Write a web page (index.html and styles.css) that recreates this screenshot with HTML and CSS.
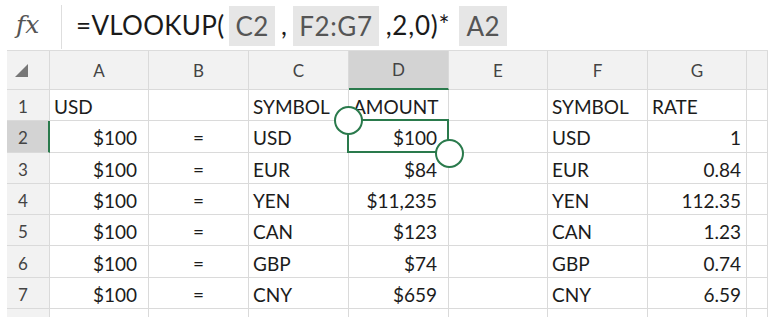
FILE: index.html
```html
<!DOCTYPE html>
<html>
<head>
<meta charset="utf-8">
<link rel="stylesheet" href="styles.css">
</head>
<body>
<div class="formula-bar">
  <div class="fx">fx</div>
  <div class="formula">
    <span>=VLOOKUP(</span>
    <span class="ref">C2</span>
    <span class="comma">,</span>
    <span class="ref">F2:G7</span>
    <span class="args">,2,0)*</span>
    <span class="ref last">A2</span>
  </div>
</div>
<div class="sheet">
  <div class="ch corner"><span class="tri"></span></div>
  <div class="ch">A</div><div class="ch">B</div><div class="ch">C</div><div class="ch sel">D</div><div class="ch">E</div><div class="ch">F</div><div class="ch">G</div><div class="ch"></div>

  <div class="rh">1</div>
  <div class="c">USD</div><div class="c"></div><div class="c">SYMBOL</div><div class="c">AMOUNT</div><div class="c"></div><div class="c">SYMBOL</div><div class="c">RATE</div><div class="c"></div>

  <div class="rh sel">2</div>
  <div class="c cur">$100</div><div class="c eq">=</div><div class="c">USD</div><div class="c cur active">$100<span class="handle h1"></span><span class="handle h2"></span></div><div class="c"></div><div class="c">USD</div><div class="c num">1</div><div class="c"></div>

  <div class="rh">3</div>
  <div class="c cur">$100</div><div class="c eq">=</div><div class="c">EUR</div><div class="c cur">$84</div><div class="c"></div><div class="c">EUR</div><div class="c num">0.84</div><div class="c"></div>

  <div class="rh">4</div>
  <div class="c cur">$100</div><div class="c eq">=</div><div class="c">YEN</div><div class="c cur">$11,235</div><div class="c"></div><div class="c">YEN</div><div class="c num">112.35</div><div class="c"></div>

  <div class="rh">5</div>
  <div class="c cur">$100</div><div class="c eq">=</div><div class="c">CAN</div><div class="c cur">$123</div><div class="c"></div><div class="c">CAN</div><div class="c num">1.23</div><div class="c"></div>

  <div class="rh">6</div>
  <div class="c cur">$100</div><div class="c eq">=</div><div class="c">GBP</div><div class="c cur">$74</div><div class="c"></div><div class="c">GBP</div><div class="c num">0.74</div><div class="c"></div>

  <div class="rh">7</div>
  <div class="c cur">$100</div><div class="c eq">=</div><div class="c">CNY</div><div class="c cur">$659</div><div class="c"></div><div class="c">CNY</div><div class="c num">6.59</div><div class="c"></div>

  <div class="rh"></div>
  <div class="c"></div><div class="c"></div><div class="c"></div><div class="c"></div><div class="c"></div><div class="c"></div><div class="c"></div><div class="c"></div>
</div>
</body>
</html>
```
FILE: styles.css
```css
* { box-sizing: border-box; }
html, body { margin: 0; padding: 0; background: #fff; }
body {
  width: 768px;
  height: 317px;
  overflow: hidden;
  font-family: Lato, "Open Sans", sans-serif;
  color: #1c1c1c;
}
.formula-bar {
  height: 51px;
  display: flex;
  align-items: center;
  border-bottom: 1px solid #dcdcdc;
  margin-left: 7px;
}
.fx {
  width: 55px;
  height: 44px;
  margin-top: 4px;
  border-right: 1px solid #dedede;
  font-family: "DejaVu Serif", "Liberation Serif", serif;
  font-style: italic;
  font-size: 25px;
  color: #555;
  display: flex;
  align-items: center;
  padding-left: 9px;
  padding-bottom: 6px;
}
.formula {
  display: flex;
  align-items: center;
  gap: 5px;
  padding-left: 14px;
  font-size: 26px;
  color: #1a1a1a;
  letter-spacing: 0.3px;
}
.formula .ref {
  background: #e6e6e6;
  color: #555;
  height: 40px;
  line-height: 40px;
  padding: 0 6px;
  margin-top: 2px;
  letter-spacing: 0.6px;
}
.formula .comma { margin: 0 1px; }
.formula .args { margin-left: 2px; letter-spacing: 0.8px; }
.formula .ref.last { margin-left: 4px; padding: 0 7px; }

.sheet {
  display: grid;
  grid-template-columns: 43px 99px 100px 100px 100px 99px 100px 99px 1fr;
  grid-template-rows: 39px;
  grid-auto-rows: 31.3px;
  height: 266px;
  overflow: hidden;
  margin-left: 7px;
  font-size: 19px;
}
.sheet > div {
  border-right: 1px solid #dadada;
  border-bottom: 1px solid #dadada;
}
.ch {
  background: #f2f2f2;
  color: #444;
  font-size: 17px;
  display: flex;
  align-items: center;
  justify-content: center;
}
.ch.sel {
  background: #d3d3d3;
  border-bottom: 2px solid #2a7a4c !important;
}
.corner { position: relative; }
.tri {
  position: absolute;
  left: 8px;
  top: 13px;
  width: 0;
  height: 0;
  border-left: 13px solid transparent;
  border-bottom: 13px solid #777;
}
.rh {
  background: #f2f2f2;
  color: #444;
  font-size: 17px;
  display: flex;
  align-items: center;
  padding: 3px 0 0 11px;
}
.rh.sel {
  background: #d3d3d3;
  border-right: 2px solid #2a7a4c !important;
}
.c {
  display: flex;
  align-items: center;
  padding: 3px 0 0 4px;
  white-space: nowrap;
}
.c.cur { justify-content: flex-end; padding-right: 11px; }
.c.num { justify-content: flex-end; padding-right: 5px; }
.c.eq { justify-content: center; padding-left: 0; }
.c.active { position: relative; }
.c.active::before {
  content: "";
  position: absolute;
  left: -2px;
  top: -2px;
  right: -1px;
  bottom: -1px;
  border: 2px solid #2a7a4c;
}
.handle {
  position: absolute;
  width: 29px;
  height: 29px;
  border-radius: 50%;
  background: #fff;
  border: 2.5px solid #2a7a4c;
  z-index: 2;
}
.h1 { left: -15px; top: -15px; }
.h2 { right: -16px; bottom: -16px; }
```
